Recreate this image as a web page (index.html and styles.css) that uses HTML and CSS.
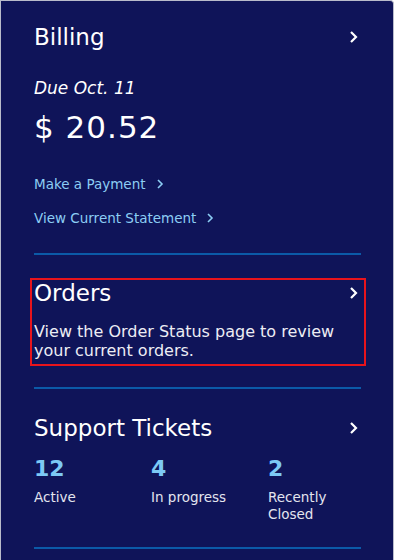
FILE: index.html
```html
<!DOCTYPE html>
<html lang="en">

<head>
    <meta charset="UTF-8">
    <meta name="viewport" content="width=device-width, initial-scale=1.0">
    <title>Account</title>
    <link rel="stylesheet" href="styles.css">
</head>

<body>
    <div class="card">
        <!-- Billing -->
        <div class="section billing">
            <div class="section-header">
                <h2>Billing</h2>
                <svg class="chevron" viewBox="0 0 10 14"><path d="M2 2l5 5-5 5" /></svg>
            </div>
            <div class="due">Due Oct. 11</div>
            <div class="amount">$ 20.52</div>
            <a class="link" href="#">Make a Payment
                <svg class="link-chevron" viewBox="0 0 8 12"><path d="M2 2l4 4-4 4" /></svg>
            </a>
            <a class="link" href="#">View Current Statement
                <svg class="link-chevron" viewBox="0 0 8 12"><path d="M2 2l4 4-4 4" /></svg>
            </a>
        </div>

        <!-- Orders -->
        <div class="section orders">
            <div class="highlight">
                <div class="section-header">
                    <h2>Orders</h2>
                    <svg class="chevron" viewBox="0 0 10 14"><path d="M2 2l5 5-5 5" /></svg>
                </div>
                <p class="desc">View the Order Status page to review your current orders.</p>
            </div>
        </div>

        <!-- Support Tickets -->
        <div class="section tickets">
            <div class="section-header">
                <h2>Support Tickets</h2>
                <svg class="chevron" viewBox="0 0 10 14"><path d="M2 2l5 5-5 5" /></svg>
            </div>
            <div class="stats">
                <div class="stat">
                    <div class="stat-num">12</div>
                    <div class="stat-label">Active</div>
                </div>
                <div class="stat">
                    <div class="stat-num">4</div>
                    <div class="stat-label">In progress</div>
                </div>
                <div class="stat">
                    <div class="stat-num">2</div>
                    <div class="stat-label">Recently Closed</div>
                </div>
            </div>
        </div>
    </div>
</body>

</html>
```

FILE: styles.css
```css
* {
    margin: 0;
    padding: 0;
    box-sizing: border-box;
    font-family: "DejaVu Sans", "Liberation Sans", sans-serif;
}

body {
    background-color: #ffffff;
    height: 100vh;
    overflow: hidden;
}

.card {
    width: 394px;
    min-height: 560px;
    background-color: #0f1459;
    border: 1px solid #b9bccb;
    border-bottom: none;
    border-top-right-radius: 4px;
    padding: 0 32px 0 33px;
    color: #ffffff;
}

.section {
    border-bottom: 2px solid #0b5aa8;
}

.billing {
    padding: 21px 0 25px;
}

.orders {
    padding: 23px 0 23px;
}

.tickets {
    padding: 24px 0 24px;
}

.section-header {
    display: flex;
    justify-content: space-between;
    align-items: center;
}

.section-header h2 {
    font-size: 23px;
    font-weight: normal;
    line-height: 30px;
}

.chevron {
    width: 10px;
    height: 14px;
    margin-right: 2px;
    fill: none;
    stroke: #ffffff;
    stroke-width: 2.2;
}

.due {
    margin-top: 24px;
    font-size: 17px;
    font-style: italic;
    line-height: 24px;
}

.amount {
    margin-top: 9px;
    font-size: 31px;
    letter-spacing: 1px;
    line-height: 36px;
}

.link {
    display: flex;
    align-items: center;
    gap: 10px;
    color: #8ccdf4;
    text-decoration: none;
    font-size: 13.5px;
    line-height: 20px;
    margin-top: 14px;
}

.amount + .link {
    margin-top: 29px;
}

.link-chevron {
    width: 8px;
    height: 12px;
    fill: none;
    stroke: #8ccdf4;
    stroke-width: 1.6;
}

.highlight {
    margin: 0 -5px 0 -4px;
    padding: 0 3px 4px 2px;
    border: 2px solid #e8141c;
}

.orders .section-header h2 {
    line-height: 26px;
}

.orders {
    padding-bottom: 21px;
}

.desc {
    margin-top: 16px;
    font-size: 16px;
    line-height: 19px;
    color: #ecedf4;
}

.stats {
    display: grid;
    grid-template-columns: 117px 117px 1fr;
    margin-top: 12px;
}

.stat-num {
    font-size: 22px;
    font-weight: bold;
    color: #7dc9f5;
    line-height: 28px;
}

.stat-label {
    margin-top: 6px;
    font-size: 13.5px;
    line-height: 17px;
    color: #e3e5ef;
    width: 80px;
}
```
